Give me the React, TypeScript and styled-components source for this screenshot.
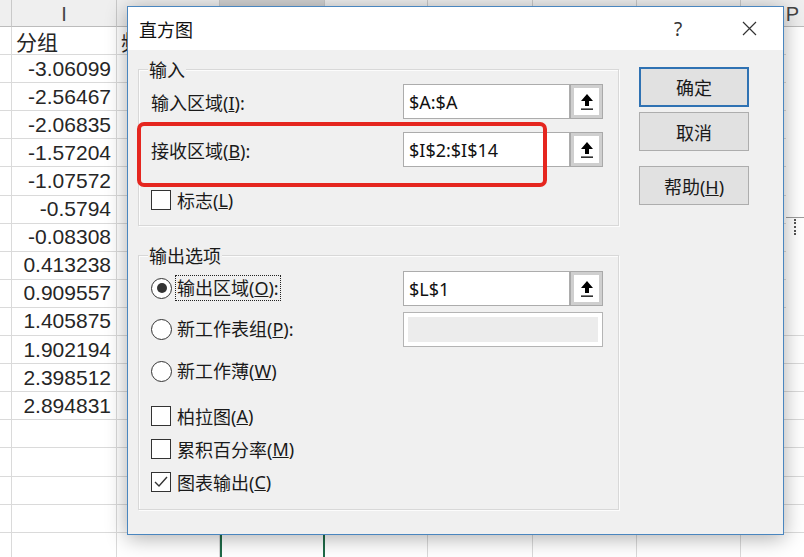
import React from 'react'
import styled, { createGlobalStyle, css } from 'styled-components'

const GlobalStyle = createGlobalStyle`
  html, body {
    margin: 0;
    padding: 0;
  }
  body {
    width: 804px;
    height: 557px;
    overflow: hidden;
    background: #fff;
  }
  * {
    box-sizing: border-box;
  }
`

// sheet geometry (partial H column, then I..P)
const COLS = [12, 105, 103, 105, 103, 105, 104, 104, 104]
const LETTERS = ['H', 'I', 'J', 'K', 'L', 'M', 'N', 'O', 'P']
// letters J..O sit under the dialog and are never seen
const VISIBLE_LETTERS = ['I', 'P']
const SELECTED_COL = 3
const ROW_H = 28.1
const ROW_COUNT = 19

const VALUES = [
  '-3.06099',
  '-2.56467',
  '-2.06835',
  '-1.57204',
  '-1.07572',
  '-0.5794',
  '-0.08308',
  '0.413238',
  '0.909557',
  '1.405875',
  '1.902194',
  '2.398512',
  '2.894831',
]

const Sheet = styled.div`
  position: relative;
  width: 804px;
  height: 557px;
  overflow: hidden;
  background: #fff;
  font-family: 'Liberation Sans', 'Noto Sans CJK SC', sans-serif;
`

const Grid = styled.div`
  display: grid;
  grid-template-columns: ${COLS.map((c) => `${c}px`).join(' ')};
  grid-template-rows: 27px repeat(${ROW_COUNT}, ${ROW_H}px);
`

const HeaderCell = styled.div<{ $selected?: boolean }>`
  display: flex;
  align-items: center;
  justify-content: center;
  padding-top: 2px;
  background: ${(p) => (p.$selected ? '#d3d3d3' : '#efefef')};
  border-right: 1px solid #c9c9c9;
  border-bottom: 1px solid #bcbcbc;
  color: #444;
  font-size: 20px;
  overflow: hidden;
`

const Cell = styled.div<{ $right?: boolean; $selected?: boolean }>`
  display: flex;
  align-items: center;
  justify-content: ${(p) => (p.$right ? 'flex-end' : 'flex-start')};
  padding: 0 5px 0 4px;
  border-right: 1px solid #dadada;
  border-bottom: 1px solid #dadada;
  font-size: 21px;
  color: #262626;
  white-space: nowrap;
  overflow: hidden;
  ${(p) =>
    p.$selected &&
    css`
      border-left: 2px solid #1f6b48;
      border-right: 2px solid #1f6b48;
    `}
`

// floating chart objects sitting on the sheet, right of the dialog
const ChartBlock = styled.div<{ $top: number; $height: number; $framed?: boolean }>`
  position: absolute;
  left: 786px;
  top: ${(p) => p.$top}px;
  width: 40px;
  height: ${(p) => p.$height}px;
  background: #fff;
  ${(p) =>
    p.$framed &&
    css`
      border-top: 1px solid #9c9c9c;
    `}
`

const ChartHandle = styled.div`
  margin: 1px 0 0 8px;
  width: 2px;
  height: 16px;
  border-left: 2px dotted #555;
`

const Dialog = styled.div`
  position: absolute;
  left: 127px;
  top: 6px;
  width: 657px;
  height: 529px;
  border: 1px solid #4a86bf;
  background: #f0f0f0;
  box-shadow: 0 3px 20px rgba(0, 0, 0, 0.33);
  display: flex;
  flex-direction: column;
  font-family: 'Noto Sans', 'Noto Sans CJK SC', sans-serif;
  font-size: 18px;
  color: #1a1a1a;
`

const TitleBar = styled.div`
  flex: none;
  height: 43px;
  background: #fff;
  display: flex;
  align-items: center;
  padding-left: 11px;
`

const Title = styled.div`
  flex: 1;
  font-family: 'Noto Sans CJK SC', sans-serif;
  font-size: 18px;
  color: #111;
`

const TitleButton = styled.div<{ $width: number }>`
  width: ${(p) => p.$width}px;
  height: 43px;
  display: flex;
  align-items: center;
  justify-content: center;
  color: #333;
  font-size: 19px;
`

const TitleButtons = styled.div`
  display: flex;
  gap: 33px;
  margin-right: 11px;
`

const Body = styled.div`
  flex: 1;
  display: flex;
  align-items: flex-start;
  padding: 17px 0 0 10px;
`

const Groups = styled.div`
  width: 481px;
  margin-top: 2px;
  display: flex;
  flex-direction: column;
`

const Group = styled.div<{ $height: number; $padTop: number }>`
  position: relative;
  height: ${(p) => p.$height}px;
  border: 1px solid #d8d8d8;
  box-shadow: inset 1px 1px 0 #fcfcfc, 1px 1px 0 #fcfcfc;
  padding: ${(p) => p.$padTop}px 15px 0 12px;
  display: flex;
  flex-direction: column;
  & + & {
    margin-top: 29px;
  }
`

const GroupTitle = styled.div`
  position: absolute;
  left: 9px;
  top: -13px;
  padding: 0 1px;
  line-height: 24px;
  background: #f0f0f0;
  font-family: 'Noto Sans CJK SC', sans-serif;
`

const FieldRow = styled.div<{ $gap?: number }>`
  display: flex;
  align-items: center;
  height: 35px;
  margin-top: ${(p) => p.$gap ?? 0}px;
`

const FieldLabel = styled.div`
  flex: 1;
  white-space: nowrap;
`

const InputBox = styled.div`
  width: 167px;
  height: 35px;
  border: 1px solid #acacac;
  background: #fff;
  padding-left: 5px;
  display: flex;
  align-items: center;
  font-size: 18px;
  color: #111;
`

const DisabledBox = styled.div`
  width: 200px;
  height: 35px;
  border: 1px solid #b4b4b4;
  background: #ececec;
  box-shadow: inset 0 0 0 4px #fff;
`

const PickButton = styled.div`
  width: 33px;
  height: 35px;
  border: 1px solid #a9a9a9;
  background: #fff;
  box-shadow: inset 0 0 0 3px #cfcfcf;
  display: flex;
  align-items: center;
  justify-content: center;
`

const OptionRow = styled.div<{ $gap?: number; $shift?: number }>`
  display: flex;
  align-items: center;
  height: 26px;
  margin-top: ${(p) => p.$gap ?? 0}px;
  padding-top: ${(p) => p.$shift ?? 0}px;
  white-space: nowrap;
  flex: ${(p) => (p.$shift ? 1 : 'none')};
  align-self: ${(p) => (p.$shift ? 'stretch' : 'auto')};
`

const CheckBox = styled.span`
  width: 20px;
  height: 20px;
  border: 1px solid #333;
  background: #fff;
  display: flex;
  align-items: center;
  justify-content: center;
  margin-right: 6px;
`

const Radio = styled.span<{ $checked?: boolean }>`
  position: relative;
  width: 21px;
  height: 21px;
  border: 1px solid #333;
  border-radius: 50%;
  background: #fff;
  margin-right: 3px;
  ${(p) =>
    p.$checked &&
    css`
      &::after {
        content: '';
        position: absolute;
        left: 4.5px;
        top: 4.5px;
        width: 10px;
        height: 10px;
        border-radius: 50%;
        background: #333;
      }
    `}
`

const RadioText = styled.span<{ $focused?: boolean }>`
  padding: 0 1px;
  line-height: 24px;
  border: 1px dotted ${(p) => (p.$focused ? '#222' : 'transparent')};
`

const ActionColumn = styled.div`
  width: 110px;
  margin-left: 20px;
  display: flex;
  flex-direction: column;
`

const ActionButton = styled.div<{ $primary?: boolean; $gap?: number }>`
  height: ${(p) => (p.$primary ? 40 : 39)}px;
  margin-top: ${(p) => p.$gap ?? 0}px;
  border: ${(p) => (p.$primary ? '2px solid #2f72b3' : '1px solid #adadad')};
  background: #e1e1e1;
  display: flex;
  align-items: center;
  justify-content: center;
  font-family: 'Noto Sans', 'Noto Sans CJK SC', sans-serif;
  font-size: 18px;
  color: #1a1a1a;
`

const Annotation = styled.div`
  position: absolute;
  left: 9px;
  top: 115px;
  width: 410px;
  height: 65px;
  border: 4px solid #e5261f;
  border-radius: 7px;
  pointer-events: none;
`

const PickIcon = () => (
  <svg width='14' height='18' viewBox='0 0 14 18'>
    <path d='M7 1 L13 8 H9 V13 H5 V8 H1 Z' fill='#000' />
    <rect x='1' y='15.5' width='12' height='1.3' fill='#000' />
  </svg>
)

const CloseIcon = () => (
  <svg width='15' height='15' viewBox='0 0 15 15'>
    <path d='M1 1 L14 14 M14 1 L1 14' stroke='#333' strokeWidth='1.2' />
  </svg>
)

const CheckMark = () => (
  <svg width='16' height='14' viewBox='0 0 16 14'>
    <polyline points='2,7 6,11 14,2' fill='none' stroke='#333' strokeWidth='1.4' />
  </svg>
)

const Field = ({ label, value }: { label: React.ReactNode; value: string }) => (
  <>
    <FieldLabel>{label}</FieldLabel>
    <InputBox>{value}</InputBox>
    <PickButton>
      <PickIcon />
    </PickButton>
  </>
)

const renderCell = (row: number, col: number) => {
  if (col === 1) {
    if (row === 0) return <Cell key={col}>分组</Cell>
    const v = VALUES[row - 1]
    return (
      <Cell key={col} $right>
        {v || ''}
      </Cell>
    )
  }
  if (col === 2 && row === 0) return <Cell key={col}>频率</Cell>
  return <Cell key={col} $selected={col === SELECTED_COL} />
}

const App = () => {
  return (
    <>
      <GlobalStyle />
      <Sheet>
        <Grid>
          {LETTERS.map((l, i) => (
            <HeaderCell key={l} $selected={i === SELECTED_COL}>
              {VISIBLE_LETTERS.includes(l) ? l : ''}
            </HeaderCell>
          ))}
          {Array.from({ length: ROW_COUNT }).map((_, r) =>
            COLS.map((_c, ci) => renderCell(r, ci))
          )}
        </Grid>
        <ChartBlock $top={28} $height={189} />
        <ChartBlock $top={217} $height={117} $framed>
          <ChartHandle />
        </ChartBlock>

        <Dialog>
          <TitleBar>
            <Title>直方图</Title>
            <TitleButtons>
              <TitleButton $width={30}>?</TitleButton>
              <TitleButton $width={46}>
                <CloseIcon />
              </TitleButton>
            </TitleButtons>
          </TitleBar>
          <Body>
            <Groups>
              <Group $height={157} $padTop={14}>
                <GroupTitle>输入</GroupTitle>
                <FieldRow>
                  <Field
                    label={
                      <>
                        输入区域(<u>I</u>):
                      </>
                    }
                    value='$A:$A'
                  />
                </FieldRow>
                <FieldRow $gap={13}>
                  <Field
                    label={
                      <>
                        接收区域(<u>B</u>):
                      </>
                    }
                    value='$I$2:$I$14'
                  />
                </FieldRow>
                <OptionRow $gap={20}>
                  <CheckBox />
                  标志(<u>L</u>)
                </OptionRow>
              </Group>

              <Group $height={255} $padTop={15}>
                <GroupTitle>输出选项</GroupTitle>
                <FieldRow>
                  <OptionRow $shift={8}>
                    <Radio $checked />
                    <RadioText $focused>
                      输出区域(<u>O</u>):
                    </RadioText>
                  </OptionRow>
                  <InputBox>$L$1</InputBox>
                  <PickButton>
                    <PickIcon />
                  </PickButton>
                </FieldRow>
                <FieldRow $gap={6}>
                  <OptionRow $shift={8}>
                    <Radio />
                    <RadioText>
                      新工作表组(<u>P</u>):
                    </RadioText>
                  </OptionRow>
                  <DisabledBox />
                </FieldRow>
                <OptionRow $gap={11}>
                  <Radio />
                  <RadioText>
                    新工作薄(<u>W</u>)
                  </RadioText>
                </OptionRow>
                <OptionRow $gap={19}>
                  <CheckBox />
                  柏拉图(<u>A</u>)
                </OptionRow>
                <OptionRow $gap={7}>
                  <CheckBox />
                  累积百分率(<u>M</u>)
                </OptionRow>
                <OptionRow $gap={7}>
                  <CheckBox>
                    <CheckMark />
                  </CheckBox>
                  图表输出(<u>C</u>)
                </OptionRow>
              </Group>
            </Groups>

            <ActionColumn>
              <ActionButton $primary>确定</ActionButton>
              <ActionButton $gap={5}>取消</ActionButton>
              <ActionButton $gap={15}>
                <span>
                  帮助(<u>H</u>)
                </span>
              </ActionButton>
            </ActionColumn>
          </Body>
          <Annotation />
        </Dialog>
      </Sheet>
    </>
  )
}

export default App
